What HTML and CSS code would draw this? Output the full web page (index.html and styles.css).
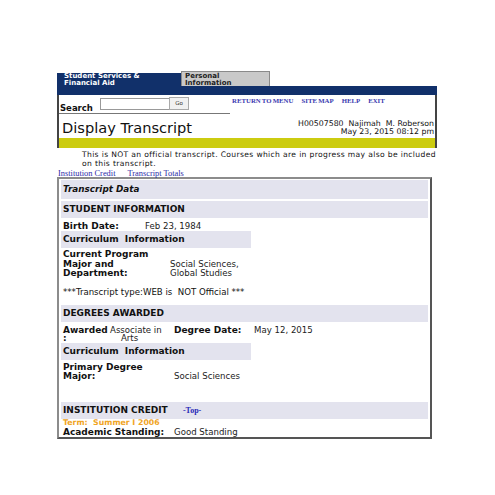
FILE: index.html
```html
<!DOCTYPE html>
<html>
<head>
<meta charset="utf-8">
<link rel="stylesheet" href="styles.css">
</head>
<body>
<div class="page">
  <div class="tabs">
    <div class="tab tab-on">Student Services &amp;<br>Financial Aid</div>
    <div class="tab tab-off">Personal<br>Information</div>
  </div>
  <div class="navbar"></div>
  <div class="header">
    <div class="search-row">
      <span class="search-label">Search</span>
      <span class="search-input"></span>
      <span class="go-btn">Go</span>
      <nav class="toplinks">
        <a>RETURN TO MENU</a><a>SITE MAP</a><a>HELP</a><a>EXIT</a>
      </nav>
    </div>
    <div class="rule"></div>
    <div class="title-row">
      <h1 class="title">Display Transcript</h1>
      <div class="userinfo">H00507580&nbsp; Najimah&nbsp; M. Roberson<br>May 23, 2015 08:12 pm</div>
    </div>
    <div class="yellow"></div>
  </div>
  <div class="notice">This is NOT an official transcript. Courses which are in progress may also be included on this transcript.</div>
  <div class="anchors"><a>Institution Credit</a><a>Transcript Totals</a></div>
  <div class="box">
    <div class="band band-td"><i>Transcript Data</i></div>
    <div class="band band-si">STUDENT INFORMATION</div>
    <div class="line l-birth"><span class="lab w82">Birth Date:</span><span class="val">Feb 23, 1984</span></div>
    <div class="band band-half b-cur1">Curriculum&nbsp; Information</div>
    <div class="line l-cp"><span class="lab">Current Program</span></div>
    <div class="line l-major"><span class="lab w109">Major and<br>Department:</span><span class="val">Social Sciences,<br>Global Studies</span></div>
    <div class="line l-type">***Transcript type:WEB is&nbsp; NOT Official ***</div>
    <div class="band band-da">DEGREES AWARDED</div>
    <div class="line l-awd"><span class="lab w47">Awarded<br>:</span><span class="val w64">Associate in<br>&nbsp; &nbsp; Arts</span><span class="lab w80">Degree Date:</span><span class="val">May 12, 2015</span></div>
    <div class="band band-half b-cur2">Curriculum&nbsp; Information</div>
    <div class="line l-pd"><span class="lab">Primary Degree</span></div>
    <div class="line l-maj2"><span class="lab w111">Major:</span><span class="val">Social Sciences</span></div>
    <div class="band band-ic">INSTITUTION CREDIT <a class="top">-Top-</a></div>
    <div class="line term">Term:&nbsp; Summer I 2006</div>
    <div class="line l-acad"><span class="lab w111">Academic Standing:</span><span class="val">Good Standing</span></div>
  </div>
</div>
</body>
</html>
```
FILE: styles.css
```css
html, body { margin: 0; padding: 0; background: #fff; }
body { font-family: "DejaVu Sans", Verdana, sans-serif; color: #111; }
.page { margin-left: 57px; padding-top: 71px; width: 380px; }

.tabs { display: flex; align-items: flex-end; height: 15px; }
.tab { font-weight: bold; font-size: 7px; line-height: 7px; box-sizing: border-box; }
.tab-on { width: 124px; height: 13px; background: #11306a; color: #fff; padding: 0 0 0 7px; }
.tab-off { width: 89px; height: 15px; background: #c9c9c9; color: #222; padding: 1px 0 0 3px; border: 1px solid #8a8a8a; border-bottom: 0; }

.navbar { height: 9px; background: #11306a; }

.header { border-left: 2px solid #444; border-right: 2px solid #444; }
.search-row { height: 18px; display: flex; align-items: flex-start; }
.search-label { font-weight: bold; font-size: 8.5px; margin: 8px 0 0 1px; width: 40px; }
.search-input { width: 68px; height: 10px; margin-top: 3px; border: 1px solid #999; border-right: 0; background: #fff; }
.go-btn { width: 18px; height: 11px; margin-top: 2px; border: 1px solid #aaa; background: #f1f1f1; font-size: 5.5px; line-height: 11px; text-align: center; color: #333; }
.toplinks { display: flex; gap: 8px; margin: 2px 0 0 43px; }
.toplinks a { font-family: "Liberation Serif", "Times New Roman", serif; font-weight: bold; font-size: 6.8px; color: #3b3bb0; word-spacing: -0.5px; }
.rule { width: 171px; height: 1px; background: #777; }

.title-row { height: 24px; display: flex; justify-content: space-between; }
.title { margin: 6px 0 0 3px; font-weight: normal; font-size: 14.6px; line-height: 16px; color: #111; }
.userinfo { font-size: 7.8px; line-height: 8px; text-align: right; margin: 6px 1px 0 0; color: #111; }
.yellow { height: 10px; background: #cccc10; }

.notice { font-size: 7.6px; line-height: 8.5px; letter-spacing: 0.35px; margin: 3px 0 0 25px; width: 356px; color: #111; }
.anchors { margin: 1px 0 0 1px; display: flex; gap: 12px; height: 8px; }
.anchors a { font-family: "Liberation Serif", "Times New Roman", serif; font-size: 8.4px; line-height: 9px; color: #2a2aa8; }

.box { width: 375px; height: 262px; box-sizing: border-box; border: 2px solid #8c8c8c; border-right-color: #555; border-bottom-color: #555; padding: 1px 2px 0 2px; }
.band { background: #e3e3ee; font-weight: bold; font-size: 9px; line-height: 17px; padding-left: 2px; height: 17px; }
.band-td { height: 19px; line-height: 19px; font-size: 8.8px; }
.band-si { margin-top: 2px; }
.band-half { width: 188px; }
.line { font-size: 8.6px; line-height: 8.5px; padding-left: 2px; display: flex; }
.lab { font-weight: bold; font-size: 9px; }
.val { color: #222; }
.w82 { width: 82px; }
.w109 { width: 107px; }
.w111 { width: 111px; }
.w47 { width: 47px; }
.w64 { width: 64px; }
.w80 { width: 80px; }
.l-birth { margin-top: 4px; }
.l-cp { margin-top: 2px; }
.l-major { margin-top: 2px; }
.l-type { margin-top: 11px; }
.band-da { margin-top: 8px; }
.l-awd { margin-top: 4px; }
.l-pd { margin-top: 3px; }
.l-maj2 { margin-top: 1px; }
.band-ic { margin-top: 21px; }
.top { font-family: "Liberation Serif", "Times New Roman", serif; font-size: 8px; color: #2a2ab8; margin-left: 12px; }
.term { color: #f0a424; font-weight: bold; font-size: 7.8px; margin-top: 0; }
.l-acad { margin-top: 1px; }
```
